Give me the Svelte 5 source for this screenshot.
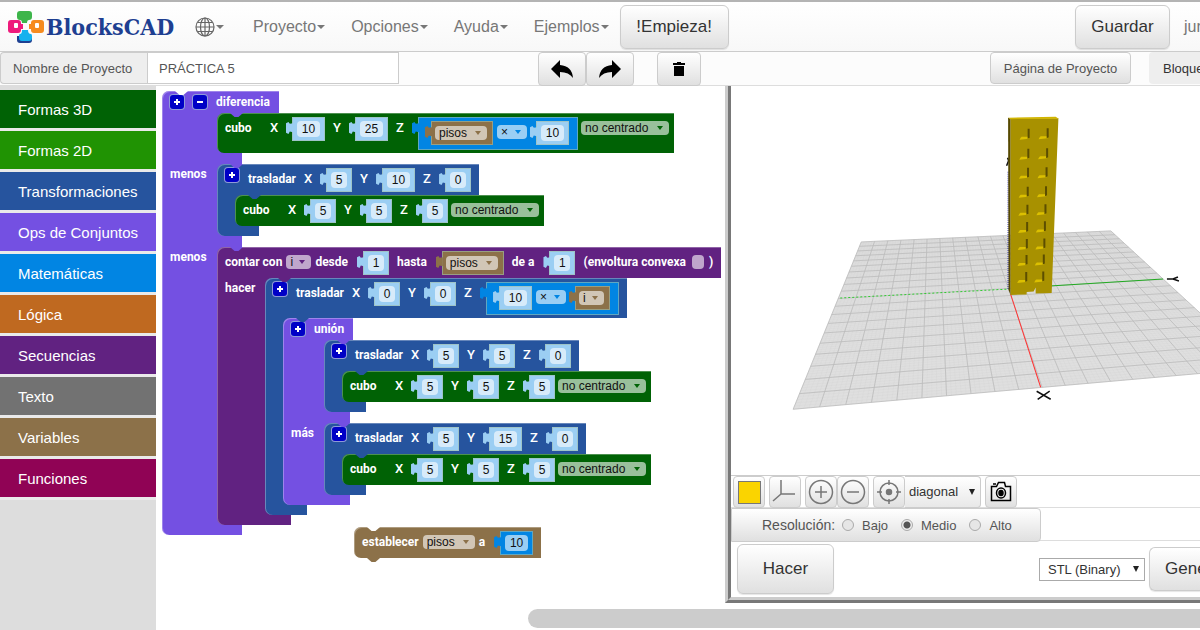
<script>
    // ── Toolbox and menus ──
    const categories = [
        { name: "Formas 3D", kind: "solid" },
        { name: "Formas 2D", kind: "flat" },
        { name: "Transformaciones", kind: "transform" },
        { name: "Ops de Conjuntos", kind: "setop" },
        { name: "Matemáticas", kind: "math" },
        { name: "Lógica", kind: "logic" },
        { name: "Secuencias", kind: "loop" },
        { name: "Texto", kind: "text" },
        { name: "Variables", kind: "variable" },
        { name: "Funciones", kind: "function" },
    ];
    const menus = ["Proyecto", "Opciones", "Ayuda", "Ejemplos"];

    // ── Field helpers ──
    const label = (text) => ({ type: "label", text });
    const axis = (text) => ({ type: "axis", text });
    const num = (value) => ({ type: "num", value });
    const pick = (text, size) => ({ type: "pick", text, size });
    const variable = (name, size) => ({
        type: "block",
        kind: "variable",
        fields: [pick(name, size)],
    });
    const times = (a, b) => ({
        type: "block",
        kind: "math",
        fields: [a, pick("×", "short"), b],
    });
    const xyz = (x, y, z) => [axis("X"), x, axis("Y"), y, axis("Z"), z];

    const cube = (x, y, z) => ({
        kind: "solid",
        fields: [{ type: "label", text: "cubo", wide: true }, ...xyz(x, y, z), pick("no centrado", "long")],
    });
    const translate = (x, y, z, child) => ({
        kind: "transform",
        icons: ["+"],
        fields: [label("trasladar"), ...xyz(x, y, z)],
        slots: [{ child }],
    });

    const floors = {
        kind: "setop",
        icons: ["+"],
        head: true,
        fields: [label("unión")],
        arm: "arm-small",
        slots: [
            { child: translate(num(5), num(5), num(0), cube(num(5), num(5), num(5))) },
            { label: "más", child: translate(num(5), num(15), num(0), cube(num(5), num(5), num(5))) },
        ],
    };

    const building = {
        kind: "setop",
        icons: ["+", "−"],
        head: true,
        fields: [label("diferencia")],
        arm: "arm-large",
        slots: [
            { child: cube(num(10), num(25), times(variable("pisos", "medium"), num(10))) },
            { label: "menos", child: translate(num(5), num(10), num(0), cube(num(5), num(5), num(5))) },
            {
                label: "menos",
                child: {
                    kind: "loop",
                    fields: [
                        label("contar con"),
                        pick("i", "tiny"),
                        label("desde"),
                        num(1),
                        label("hasta"),
                        variable("pisos", "medium"),
                        label("de a"),
                        num(1),
                        label("(envoltura convexa"),
                        { type: "check" },
                        label(")"),
                    ],
                    arm: "arm-medium",
                    slots: [
                        {
                            label: "hacer",
                            child: translate(num(0), num(0), times(num(10), variable("i", "tiny")), floors),
                        },
                    ],
                },
            },
        ],
    };

    const setter = {
        kind: "variable",
        fields: [label("establecer"), pick("pisos", "medium"), label("a"), { type: "num", value: 10, dark: true }],
    };

    // ── 3D view ──
    // Projects a point of the unit square onto the ground plane
    const corners = [[862, 242], [1111, 231], [1260, 368], [794, 409]];

    function makeProjection([p0, p1, p2, p3]) {
        const dx1 = p1[0] - p2[0];
        const dx2 = p3[0] - p2[0];
        const dy1 = p1[1] - p2[1];
        const dy2 = p3[1] - p2[1];
        const sx = p0[0] - p1[0] + p2[0] - p3[0];
        const sy = p0[1] - p1[1] + p2[1] - p3[1];
        const det = dx1 * dy2 - dx2 * dy1;
        const g = (sx * dy2 - dx2 * sy) / det;
        const h = (dx1 * sy - sx * dy1) / det;
        return (u, v) => {
            const w = g * u + h * v + 1;
            const x = (p1[0] - p0[0] + g * p1[0]) * u + (p3[0] - p0[0] + h * p3[0]) * v + p0[0];
            const y = (p1[1] - p0[1] + g * p1[1]) * u + (p3[1] - p0[1] + h * p3[1]) * v + p0[1];
            return `${(x / w).toFixed(1)} ${(y / w).toFixed(1)}`;
        };
    }

    const project = makeProjection(corners);

    function gridPath(steps) {
        let d = "";
        for (let i = 0; i <= steps; i++) {
            const t = i / steps;
            d += `M${project(t, 0)}L${project(t, 1)}M${project(0, t)}L${project(1, t)}`;
        }
        return d;
    }

    const windowRows = [129, 149, 168, 187, 205, 222, 239, 255, 272];
    const windows = windowRows.flatMap((y, i) => [
        { x: 1030 - i * 0.3, y },
        { x: 1049 - i * 0.55, y: y - 0.5 },
    ]);

    let projectName = "PRÁCTICA 5";
    let resolution = "Medio";
</script>

{#snippet dropdown(text, size)}
    <span class="dropdown {size}">
        <select aria-label={text}><option>{text}</option></select>
    </span>
{/snippet}

{#snippet field(f)}
    {#if f.type === "label"}
        <span class="label" class:wide={f.wide}>{f.text}</span>
    {:else if f.type === "axis"}
        <span class="label axis">{f.text}</span>
    {:else if f.type === "num"}
        <span class="value number" class:dark={f.dark}>
            <input class:double={f.value > 9} aria-label="número" value={f.value} />
        </span>
    {:else if f.type === "pick"}
        {@render dropdown(f.text, f.size)}
    {:else if f.type === "check"}
        <input class="check" type="checkbox" aria-label="envoltura convexa" />
    {:else}
        <span class="value nested {f.kind}">
            {#each f.fields as inner}{@render field(inner)}{/each}
        </span>
    {/if}
{/snippet}

{#snippet block(b)}
    <div class="block {b.kind}" class:container={b.slots}>
        <div class="row" class:head={b.head}>
            {#each b.icons ?? [] as icon}
                <button class="mutator" aria-label={icon === "+" ? "añadir" : "quitar"}>
                    <svg viewBox="0 0 14 14" width="14" height="14">
                        <path d={icon === "+" ? "M4 7h6M7 4v6" : "M4 7h6"} />
                    </svg>
                </button>
            {/each}
            {#each b.fields as f}{@render field(f)}{/each}
        </div>
        {#each b.slots ?? [] as slot, i}
            {#if i > 0}<div class="spacer {b.arm}"></div>{/if}
            <div class="statement">
                <div class="arm {b.arm}">{slot.label ?? ""}</div>
                <div class="slot">{@render block(slot.child)}</div>
            </div>
        {/each}
        {#if b.slots}<div class="spacer foot {b.arm}"></div>{/if}
    </div>
{/snippet}

<div class="app">
    <nav class="navbar">
        <a class="logo" href="#home">
            <svg viewBox="0 0 36 34" width="36" height="34">
                <path fill="#3db54a" d="M9 4q0-3 3-3h9q3 0 3 3v3q0 3-3 3-2 0-2 3h-5q0-3-2-3-3 0-3-3z" />
                <path fill="#ee1b7c" d="M3 10h7q3 0 3 3v1h2v5h-2v1q0 3-3 3H3q-3 0-3-3v-7q0-3 3-3z" />
                <path fill="#f68b1f" d="M26 10h7q3 0 3 3v7q0 3-3 3h-7q-3 0-3-3v-1h-2v-5h2v-1q0-3 3-3z" />
                <path fill="#1e3f91" d="M9 26h15v4q0 3-3 3h-9q-3 0-3-3z" />
                <path fill="#15b1ee" d="M14 20h6q0 4 3 4 1 0 1 2v2q0 3-3 3h-7q-3 0-3-3v-2q0-2 1-2 2 0 2-4z" />
                <rect x="6" y="13" width="4" height="5" rx="1" fill="#fff" />
                <rect x="27" y="13" width="4" height="5" rx="1" fill="#fff" />
            </svg>
            <span>BlocksCAD</span>
        </a>
        <button class="menu language" aria-label="Idioma">
            <svg viewBox="0 0 20 20" width="20" height="20">
                <g fill="none" stroke="#666" stroke-width="1.2">
                    <circle cx="10" cy="10" r="9" />
                    <ellipse cx="10" cy="10" rx="4.5" ry="9" />
                    <path d="M10 1v18M1 10h18M3 5.5h14M3 14.5h14" />
                </g>
            </svg>
        </button>
        {#each menus as menu}
            <button class="menu">{menu}</button>
        {/each}
        <button class="button big start">!Empieza!</button>
        <button class="button big save">Guardar</button>
        <a class="user" href="#user">jun</a>
    </nav>

    <div class="toolbar">
        <label class="addon" for="project-name">Nombre de Proyecto</label>
        <input id="project-name" class="project-name" bind:value={projectName} />
        <div class="history">
            <button class="button tool" aria-label="Deshacer">
                <svg viewBox="0 0 24 20" width="24" height="20">
                    <path d="M1 10 10 1v5q12 1 13 13-4-6-13-6v6z" />
                </svg>
            </button>
            <button class="button tool" aria-label="Rehacer">
                <svg viewBox="0 0 24 20" width="24" height="20">
                    <path d="M23 10 14 1v5Q2 7 1 19q4-6 13-6v6z" />
                </svg>
            </button>
        </div>
        <button class="button tool trash" aria-label="Borrar">
            <svg viewBox="0 0 12 14" width="12" height="14">
                <path d="M4 0h4v1h4v2H0V1h4zM1 4h10v10H1z" />
            </svg>
        </button>
        <button class="button page">Página de Proyecto</button>
        <button class="tab">Bloques</button>
    </div>

    <main class="main">
        <aside class="toolbox">
            {#each categories as category}
                <button class="category {category.kind}">{category.name}</button>
            {/each}
        </aside>

        <section class="workspace">
            <div class="slot origin building">{@render block(building)}</div>
            <div class="slot origin setter">{@render block(setter)}</div>
        </section>

        <section class="viewer">
            <svg class="scene" viewBox="732 86 468 389" preserveAspectRatio="xMidYMid slice">
                <path class="ground" d="M862 242 1111 231 1260 368 794 409z" />
                <path class="grid minor" d={gridPath(100)} />
                <path class="grid" d={gridPath(20)} />
                <path stroke="#3c3" stroke-dasharray="2 2" d="M841 298 1010 289" />
                <path stroke="#2a2" d="M1050 286 1163 279" />
                <path stroke="#f33" d="M1011 294 1041 387" />
                <path stroke="#22a" stroke-dasharray="1 1" d="M1008.5 172V290" />
                <path class="mark" d="m1008 158 1 3-2 5M1167 279h6l5-2M1173 279l6 2M1037 391l14 8M1038 399l12-8" />
                <path fill="#564900" d="M1008.5 118 1011 119v176l-2-5z" />
                <path fill="#a89100" d="M1011 119 1058.7 118.5 1052 293l-16 .5v-6l-2 4-7 .5v2.5l-16 .5z" />
                <path fill="#d1b500" d="M1008.5 118 1056 117l3 2-48 .5z" />
                {#each windows as w}
                    <path fill="#dcc000" d="M{w.x - 9} {w.y + 9}l1-1h7v2l-9 1z" />
                    <path fill="#5c4e00" d="M{w.x - 2} {w.y}h2v9l-2 1z" />
                {/each}
            </svg>

            <div class="view-tools">
                <button class="button view color" aria-label="Color"><i></i></button>
                <button class="button view" aria-label="Ejes">
                    <svg viewBox="0 0 26 26" width="26" height="26"><path d="M9 1v14H23M9 15l-8 7" /></svg>
                </button>
                <div class="group">
                    <button class="button view" aria-label="Acercar">
                        <svg viewBox="0 0 26 26" width="26" height="26">
                            <circle cx="13" cy="13" r="11.5" /><path d="M7 13h12M13 7v12" />
                        </svg>
                    </button>
                    <button class="button view" aria-label="Alejar">
                        <svg viewBox="0 0 26 26" width="26" height="26">
                            <circle cx="13" cy="13" r="11.5" /><path d="M7 13h12" />
                        </svg>
                    </button>
                </div>
                <div class="group">
                    <button class="button view" aria-label="Centrar">
                        <svg viewBox="0 0 26 26" width="26" height="26">
                            <circle cx="13" cy="13" r="9" />
                            <circle cx="13" cy="13" r="2.5" fill="#777" />
                            <path d="M13 1v5M13 20v5M1 13h5M20 13h5" />
                        </svg>
                    </button>
                    <span class="select angle">
                        <select aria-label="Vista"><option>diagonal</option></select>
                    </span>
                </div>
                <button class="button view camera" aria-label="Captura">
                    <svg viewBox="0 0 22 22" width="22" height="22">
                        <path d="M1.5 5.5h5l2-4h6l1 4h5v14h-19zM3 3h3" />
                        <ellipse cx="11" cy="12" rx="4.5" ry="5" />
                        <ellipse cx="11" cy="12" rx="2" ry="2.5" fill="#000" />
                    </svg>
                </button>
            </div>

            <div class="resolution-bar">
                <fieldset class="resolution">
                    <span class="caption">Resolución:</span>
                    {#each ["Bajo", "Medio", "Alto"] as level}
                        <label><input type="radio" bind:group={resolution} value={level} />{level}</label>
                    {/each}
                </fieldset>
            </div>

            <div class="output">
                <button class="button big render">Hacer</button>
                <span class="select format">
                    <select aria-label="Formato"><option>STL (Binary)</option></select>
                </span>
                <button class="button big generate">Generar</button>
            </div>
        </section>
        <div class="scrollbar"></div>
    </main>
</div>

<style>
    :global(body) {
        margin: 0;
        overflow: hidden;
    }

    .app {
        display: flex;
        flex-direction: column;
        height: 100vh;
        overflow: hidden;
        background: #fff;
        color: #333;
        font-family: "Liberation Sans", Arial, sans-serif;
        font-size: 13px;
    }
    .app * {
        box-sizing: border-box;
    }
    button,
    input,
    select {
        margin: 0;
        padding: 0;
        font: inherit;
        color: inherit;
        white-space: nowrap;
    }
    svg {
        display: block;
    }

    /* ── Block colours ── */
    .solid { --fill: #006205; }
    .flat { --fill: #209303; }
    .transform { --fill: #26549e; }
    .setop { --fill: #7450e2; }
    .math { --fill: #0185e3; }
    .logic { --fill: #bf6920; }
    .loop { --fill: #612281; }
    .text { --fill: #727272; }
    .variable { --fill: #8c7149; }
    .function { --fill: #900355; }

    /* ── Buttons ── */
    .button {
        flex: none;
        border: 1px solid #ccc;
        border-radius: 4px;
        background: linear-gradient(#fff, #e0e0e0);
    }
    .big {
        height: 44px;
        border-radius: 6px;
        box-shadow: 0 1px 1px rgba(0, 0, 0, 0.1);
        font-size: 17px;
    }

    /* ── Navbar ── */
    .navbar {
        flex: none;
        display: flex;
        align-items: center;
        height: 52px;
        border-top: 2px solid #b4b4b4;
        border-bottom: 1px solid #ccc;
        background: linear-gradient(#fff, #f8f8f8);
    }
    .logo {
        display: flex;
        align-items: center;
        gap: 2px;
        margin-left: 8px;
        width: 187px;
        color: #1e3f91;
        font: bold 23px "DejaVu Serif Condensed", "DejaVu Serif", serif;
        text-decoration: none;
    }
    .menu {
        display: flex;
        align-items: center;
        margin-right: 26px;
        border: 0;
        background: none;
        color: #777;
        font-size: 16px;
    }
    .menu.language {
        margin-right: 29px;
    }
    .menu::after {
        content: "";
        margin-left: 1px;
        border: 4px solid transparent;
        border-top-color: #777;
        border-bottom: 0;
    }
    .start {
        width: 109px;
        margin-left: -15px;
    }
    .save {
        width: 95px;
        margin-left: auto;
    }
    .user {
        flex: none;
        width: 30px;
        padding-left: 14px;
        overflow: hidden;
        color: #777;
        font-size: 16px;
        text-decoration: none;
    }

    /* ── Toolbar ── */
    .toolbar {
        flex: none;
        display: flex;
        height: 34px;
        border-bottom: 1px solid #ddd;
        background: #fcfcfc;
    }
    .addon {
        width: 147px;
        height: 32px;
        padding-left: 12px;
        border: 1px solid #ccc;
        border-right: 0;
        border-radius: 4px 0 0 4px;
        background: #eee;
        color: #555;
        line-height: 31px;
    }
    .project-name {
        width: 252px;
        height: 32px;
        padding: 0 11px;
        border: 1px solid #ccc;
        background: #fff;
        color: #555;
    }
    .history {
        display: flex;
        margin: 0 23px 0 139px;
    }
    .tool {
        display: grid;
        place-items: center;
        width: 48px;
        height: 34px;
    }
    .trash {
        width: 44px;
    }
    .page {
        width: 141px;
        height: 32px;
        margin: 0 18px 0 auto;
        color: #555;
    }
    .tab {
        flex: none;
        width: 51px;
        height: 32px;
        padding-left: 14px;
        overflow: hidden;
        border: 0;
        border-radius: 4px 0 0 4px;
        background: #eee;
        text-align: left;
    }

    /* ── Main area ── */
    .main {
        flex: 1;
        position: relative;
        display: grid;
        grid-template-columns: 156px minmax(0, 1fr) 475px;
        min-height: 0;
    }
    .toolbox {
        display: flex;
        flex-direction: column;
        gap: 3px;
        padding-top: 4px;
        background: #ddd;
    }
    .category {
        flex: none;
        height: 38px;
        padding-left: 18px;
        border: 0;
        background: var(--fill);
        box-shadow: 0 3px #eaeaea;
        color: #fff;
        font-size: 15px;
        text-align: left;
    }
    .workspace {
        --fill: #fff;
        position: relative;
    }
    .scrollbar {
        position: absolute;
        right: 0;
        bottom: 2px;
        width: 56%;
        height: 19px;
        border-radius: 10px 0 0 10px;
        background: #ccc;
    }

    /* ── Blocks on the canvas ── */
    .origin {
        position: absolute;
    }
    .building {
        left: 6px;
        top: 5px;
    }
    .setter {
        left: 198px;
        top: 441px;
    }
    .block {
        display: flex;
        flex-direction: column;
        align-items: flex-start;
        color: #fff;
        font-size: 12px;
        white-space: nowrap;
    }
    .row {
        display: flex;
        align-items: flex-start;
        min-height: 31px;
        padding: 4px 8px 3px 8px;
        border-radius: 7px 0 0 7px;
        background: var(--fill);
        box-shadow: inset 1px 1px rgba(255, 255, 255, 0.3);
    }
    .solid > .row {
        padding-right: 1px;
    }
    .container > .row {
        border-radius: 7px 0 0 0;
    }
    .head {
        min-height: 22px;
        padding: 0 9px 0 8px;
    }
    .statement {
        display: flex;
        align-items: stretch;
    }
    .arm {
        width: 18px;
        background: var(--fill);
        box-shadow: inset 1px 0 rgba(255, 255, 255, 0.3);
        font-weight: bold;
        font-family: Roboto, sans-serif;
        line-height: 20px;
    }
    .spacer {
        width: 42px;
        height: 11px;
        background: var(--fill);
        box-shadow: inset 1px 0 rgba(255, 255, 255, 0.3);
    }
    .foot {
        height: 10px;
        border-radius: 0 0 0 7px;
    }
    .arm-small { width: 41px; padding-left: 8px; }
    .arm-medium { width: 48px; padding-left: 8px; }
    .arm-large { width: 55px; padding-left: 8px; }
    .spacer.arm-small { width: 67px; }
    .spacer.arm-medium { width: 74px; }
    .spacer.arm-large { width: 80px; }

    /* The parent's colour shows behind the rounded corners and in the notch */
    .slot {
        background: linear-gradient(var(--fill), var(--fill)) left / 8px 100% no-repeat;
    }
    .slot:not(.origin) {
        position: relative;
    }
    .slot::before {
        content: "";
        position: absolute;
        left: 13px;
        top: 0;
        width: 13px;
        height: 4px;
        background: var(--fill);
        clip-path: polygon(0 0, 100% 0, 65% 100%, 35% 100%);
    }
    .setter::after {
        content: "";
        position: absolute;
        left: 13px;
        top: 100%;
        width: 13px;
        height: 4px;
        background: #8c7149;
        clip-path: polygon(0 0, 100% 0, 65% 100%, 35% 100%);
    }

    .mutator {
        width: 14px;
        height: 14px;
        margin-right: 9px;
        border: 0;
        border-radius: 3px;
        background: #0000c6;
        box-shadow: 0 0 0 1px #8f9ad8;
    }
    .head .mutator {
        margin-top: 4px;
    }
    .mutator path {
        stroke: #fff;
        stroke-width: 2;
    }

    /* ── Fields ── */
    .label {
        margin-left: 8px;
        font-family: Roboto, sans-serif;
        font-weight: bold;
        line-height: 22px;
    }
    .label:first-child,
    .mutator + .label,
    .dropdown + .label,
    .check + .label {
        margin-left: 0;
    }
    .wide {
        width: 37px;
    }
    .axis {
        width: 9px;
        font-size: 13px;
        font-weight: 500;
    }
    .value {
        position: relative;
        display: flex;
        align-items: flex-start;
        margin-left: 13px;
        padding: 4px 5px;
        background: var(--fill);
        box-shadow: inset 0 0 0 1px rgba(160, 190, 170, 0.6);
    }
    .value::before {
        content: "";
        position: absolute;
        left: -6px;
        top: 5px;
        width: 7px;
        height: 12px;
        background: var(--fill);
        clip-path: polygon(100% 10%, 55% 15%, 35% 0, 0 10%, 0 90%, 35% 100%, 55% 80%, 100% 85%);
    }
    .label:not(.axis) + .value {
        margin-left: 15px;
    }
    .dropdown + .value {
        margin-left: 5px;
    }
    .number {
        --fill: #9bcef3;
    }
    .number.dark {
        --fill: #0185e3;
    }
    .value input {
        width: 16px;
        height: 16px;
        border: 0;
        border-radius: 4px;
        background: rgba(255, 255, 255, 0.6);
        color: #111;
        text-align: center;
    }
    .value input.double {
        width: 23px;
    }
    .nested.math {
        padding: 4px 9px 5px 0;
    }
    .nested.variable {
        padding: 1px 2px 1px 0;
    }
    .dropdown {
        position: relative;
        display: flex;
        align-items: center;
        margin: 4px;
    }
    .dropdown select,
    .select select {
        appearance: none;
        outline: 0;
    }
    .dropdown select {
        width: 100%;
        height: 14px;
        padding-left: 4px;
        border: 0;
        border-radius: 4px;
        background: rgba(255, 255, 255, 0.6);
        color: #111;
        line-height: 14px;
    }
    .dropdown::after {
        content: "";
        position: absolute;
        right: 6px;
        border: 3px solid transparent;
        border-top: 4px solid var(--fill);
        border-bottom: 0;
        pointer-events: none;
    }
    .tiny { width: 25px; }
    .short { width: 30px; }
    .medium { width: 52px; }
    .long { width: 88px; margin-left: 3px; }
    .check {
        appearance: none;
        width: 12px;
        height: 14px;
        margin: 4px 5px 4px 6px;
        border-radius: 4px;
        background: rgba(255, 255, 255, 0.6);
    }

    /* ── 3D viewer ── */
    .viewer {
        display: flex;
        flex-direction: column;
        align-self: start;
        overflow: hidden;
        border: 6px ridge #ccc;
        border-top: 0;
        border-right: 0;
        background: #fff;
    }
    .scene {
        width: 100%;
        height: 389px;
    }
    .scene path {
        stroke-width: 1;
    }
    .ground {
        fill: #dfdfdf;
    }
    .scene .grid {
        fill: none;
        stroke: #bbb;
        stroke-width: 0.8;
    }
    .scene .minor {
        opacity: 0.12;
    }
    .scene .mark {
        fill: none;
        stroke: #111;
        stroke-width: 1.5;
    }
    .view-tools {
        display: flex;
        gap: 4px;
        height: 33px;
        padding-left: 2px;
        border-top: 1px solid #ccc;
        border-bottom: 1px solid #ddd;
    }
    .group {
        display: flex;
    }
    .view {
        display: grid;
        place-items: center;
        width: 32px;
        height: 32px;
    }
    .view svg {
        fill: none;
        stroke: #777;
        stroke-width: 1.5;
    }
    .camera svg {
        stroke: #000;
    }
    .color i {
        width: 23px;
        height: 23px;
        border: 1px solid #777;
        background: #fad400;
    }
    .select {
        position: relative;
        display: flex;
        align-items: center;
    }
    .select::after {
        content: "";
        position: absolute;
        right: 6px;
        border: 3px solid transparent;
        border-top: 6px solid #222;
        border-bottom: 0;
        pointer-events: none;
    }
    .angle select {
        width: 76px;
        height: 32px;
        padding-left: 4px;
        border: 1px solid #ccc;
        border-left: 0;
        border-radius: 0 4px 4px 0;
        background: linear-gradient(#fff, #e8e8e8);
    }
    .resolution-bar {
        height: 33px;
        border-bottom: 1px solid #ddd;
    }
    .resolution {
        display: flex;
        align-items: center;
        width: 310px;
        height: 34px;
        margin: 0;
        padding: 0 0 0 30px;
        border: 1px solid #ccc;
        border-radius: 0 4px 4px 0;
        background: linear-gradient(#fff, #e0e0e0);
        color: #555;
    }
    .caption {
        width: 80px;
        font-size: 14px;
    }
    .resolution label {
        display: flex;
        align-items: center;
        margin-right: 13px;
    }
    .resolution input {
        appearance: none;
        width: 12px;
        height: 12px;
        margin-right: 8px;
        border: 1px solid #aaa;
        border-radius: 50%;
        background: #e6e6e6;
    }
    .resolution input:checked {
        background: radial-gradient(circle, #555 3px, #eee 4px);
    }
    .output {
        display: flex;
        align-items: center;
        height: 56px;
        padding-left: 6px;
    }
    .render {
        width: 97px;
        height: 50px;
    }
    .format {
        margin: 0 4px 0 auto;
    }
    .format select {
        width: 106px;
        height: 23px;
        padding-left: 8px;
        border: 1px solid #aaa;
        background: #fff;
    }
    .generate {
        width: 51px;
        padding-left: 15px;
        overflow: hidden;
        border-right: 0;
        border-radius: 6px 0 0 6px;
        text-align: left;
    }
</style>
